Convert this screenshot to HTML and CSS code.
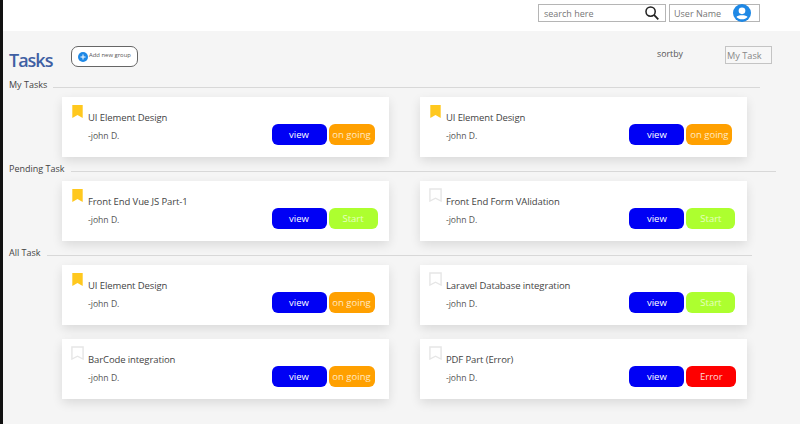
FILE: index.html
```html
<!DOCTYPE html>
<html lang="en">
<head>
<meta charset="utf-8">
<title>Tasks</title>
<link rel="stylesheet" href="styles.css">
</head>
<body>
<div class="app">
  <header class="topbar">
    <div class="search">
      <span>search here</span>
      <svg class="search-icon" viewBox="0 0 20 20"><circle cx="8" cy="8" r="6.6" fill="none" stroke="#222" stroke-width="2.2"/><path d="M12.8 12.8 L19 19" stroke="#222" stroke-width="2.6" fill="none"/></svg>
    </div>
    <div class="user">
      <span>User Name</span>
      <svg class="user-icon" viewBox="0 0 20 20"><circle cx="10" cy="10" r="10" fill="#1e88e5"/><circle cx="10" cy="7.6" r="3.7" fill="#fff"/><path d="M3.8 14.4 C5 11.9 15 11.9 16.2 14.4 C14.6 16.2 12.4 16.9 10 16.9 C7.6 16.9 5.4 16.2 3.8 14.4Z" fill="#fff"/></svg>
    </div>
  </header>
  <main class="content">
    <div class="title-row">
      <h1 class="title">Tasks</h1>
      <button class="add-group">
        <svg viewBox="0 0 10 10" width="10" height="10"><circle cx="5" cy="5" r="5" fill="#1e88e5"/><path d="M5 2.5V7.5M2.5 5H7.5" stroke="#fff" stroke-width="1"/></svg>
        <span>Add new group</span>
      </button>
      <span class="sortby">sortby</span>
      <div class="sort-select">My Task</div>
    </div>

    <section class="group group-my">
      <div class="group-head"><span>My Tasks</span><i class="rule"></i></div>
      <div class="cards">
        <article class="card"><svg class="mark" viewBox="0 0 12 15"><path d="M0 0H12V15L6 11.5L0 15Z" fill="#ffc81e"/></svg><div class="card-text"><div class="name">UI Element Design</div><div class="who">-john D.</div></div><div class="actions"><button class="btn view">view</button><button class="btn going">on going</button></div></article>
        <article class="card"><svg class="mark" viewBox="0 0 12 15"><path d="M0 0H12V15L6 11.5L0 15Z" fill="#ffc81e"/></svg><div class="card-text"><div class="name">UI Element Design</div><div class="who">-john D.</div></div><div class="actions"><button class="btn view">view</button><button class="btn going">on going</button></div></article>
      </div>
    </section>

    <section class="group group-pending">
      <div class="group-head"><span>Pending Task</span><i class="rule"></i></div>
      <div class="cards">
        <article class="card"><svg class="mark" viewBox="0 0 12 15"><path d="M0 0H12V15L6 11.5L0 15Z" fill="#ffc81e"/></svg><div class="card-text"><div class="name">Front End Vue JS Part-1</div><div class="who">-john D.</div></div><div class="actions"><button class="btn view">view</button><button class="btn start">Start</button></div></article>
        <article class="card"><svg class="mark empty" viewBox="0 0 14 15"><path d="M1 1H13V14L7 11L1 14Z" fill="none" stroke="#e6e6e6" stroke-width="1.5"/></svg><div class="card-text"><div class="name">Front End Form VAlidation</div><div class="who">-john D.</div></div><div class="actions"><button class="btn view">view</button><button class="btn start">Start</button></div></article>
      </div>
    </section>

    <section class="group group-all">
      <div class="group-head"><span>All Task</span><i class="rule"></i></div>
      <div class="cards">
        <article class="card"><svg class="mark" viewBox="0 0 12 15"><path d="M0 0H12V15L6 11.5L0 15Z" fill="#ffc81e"/></svg><div class="card-text"><div class="name">UI Element Design</div><div class="who">-john D.</div></div><div class="actions"><button class="btn view">view</button><button class="btn going">on going</button></div></article>
        <article class="card"><svg class="mark empty" viewBox="0 0 14 15"><path d="M1 1H13V14L7 11L1 14Z" fill="none" stroke="#e6e6e6" stroke-width="1.5"/></svg><div class="card-text"><div class="name">Laravel Database integration</div><div class="who">-john D.</div></div><div class="actions"><button class="btn view">view</button><button class="btn start">Start</button></div></article>
        <article class="card"><svg class="mark empty" viewBox="0 0 14 15"><path d="M1 1H13V14L7 11L1 14Z" fill="none" stroke="#e6e6e6" stroke-width="1.5"/></svg><div class="card-text"><div class="name">BarCode integration</div><div class="who">-john D.</div></div><div class="actions"><button class="btn view">view</button><button class="btn going">on going</button></div></article>
        <article class="card"><svg class="mark empty" viewBox="0 0 14 15"><path d="M1 1H13V14L7 11L1 14Z" fill="none" stroke="#e6e6e6" stroke-width="1.5"/></svg><div class="card-text"><div class="name">PDF Part (Error)</div><div class="who">-john D.</div></div><div class="actions"><button class="btn view">view</button><button class="btn error">Error</button></div></article>
      </div>
    </section>
  </main>
</div>
</body>
</html>
```
FILE: styles.css
```css
* { box-sizing: border-box; }
html, body { margin: 0; padding: 0; height: 100%; overflow: hidden; }
body { font-family: "Open Sans", "Noto Sans", sans-serif; color: #444; background: #f5f5f5; }
.app { height: 424px; border-left: 3px solid #111; background: #f5f5f5; }

.topbar { height: 31px; background: #fff; display: flex; align-items: flex-start; padding: 4px 0 0 535px; gap: 3px; }
.search, .user { height: 18px; border: 1px solid #b5b5b5; display: flex; align-items: center; font-size: 9px; color: #777; background: #fff; }
.search { width: 128px; padding-left: 5px; justify-content: space-between; }
.search-icon { width: 14px; height: 14px; margin-right: 6px; }
.user { width: 91px; padding-left: 4px; }
.user-icon { width: 18px; height: 18px; margin-left: auto; margin-right: 8px; }

.content { display: flex; flex-direction: column; }
.title-row { height: 45px; display: flex; align-items: flex-start; padding: 0 28px 0 6px; }
.title { margin: 14px 0 0; font-size: 18px; line-height: 30px; font-weight: 600; letter-spacing: -1px; color: #3f5fa3; width: 62px; }
.add-group { margin-top: 15px; width: 67px; height: 21px; border: 1px solid #666; border-radius: 7px; background: #fff; padding: 0 0 0 6px; display: flex; align-items: center; gap: 1px; font-family: inherit; font-size: 5.9px; color: #555; white-space: nowrap; }
.add-group span { margin-top: -3px; }
.sortby { margin: 16px 0 0 519px; font-size: 8.8px; line-height: 14px; color: #555; }
.sort-select { margin: 15px 0 0 auto; width: 47px; height: 18px; border: 1px solid #c4c4c4; font-size: 9.2px; line-height: 17px; padding-left: 1px; color: #888; background: #f7f7f7; }

.group-head { height: 21px; display: flex; align-items: flex-start; gap: 6px; padding-left: 6px; font-size: 9px; line-height: 18px; color: #444; }
.rule { display: block; flex: 1; height: 1px; background: #d8d8d8; margin-top: 11px; }
.group-my .group-head { width: 757px; }
.group-pending .group-head { width: 773px; }
.group-all .group-head { width: 749px; }

.cards { display: grid; grid-template-columns: 327px 327px; column-gap: 30.9px; row-gap: 14px; padding-left: 59px; }
.group-my, .group-pending { height: 84px; }

.card { height: 60px; background: #fff; box-shadow: 0 4px 10px rgba(0,0,0,.11); position: relative; display: flex; align-items: flex-start; padding: 13px 0 0 26px; }
.mark { position: absolute; left: 10px; top: 8px; width: 11px; height: 13px; }
.mark.empty { left: 9px; top: 7px; width: 13px; height: 14px; }
.card-text { width: 183.5px; flex: none; }
.name { font-size: 9.5px; line-height: 16px; letter-spacing: -.1px; color: #444; }
.who { font-size: 8.6px; line-height: 14px; margin-top: 3px; color: #555; }
.actions { display: flex; gap: 2px; margin-top: 14px; }
.btn { height: 20.5px; border: 0; border-radius: 6px; color: #fff; font-family: inherit; font-size: 9.5px; padding: 0; }
.view { width: 55px; background: #0000f5; }
.going { width: 46px; background: #ffa000; color: #ffe9c4; }
.start { width: 49px; background: #adff2f; color: #e6ffc0; }
.error { width: 50px; background: #fe0000; color: #ffd9d9; }
```
